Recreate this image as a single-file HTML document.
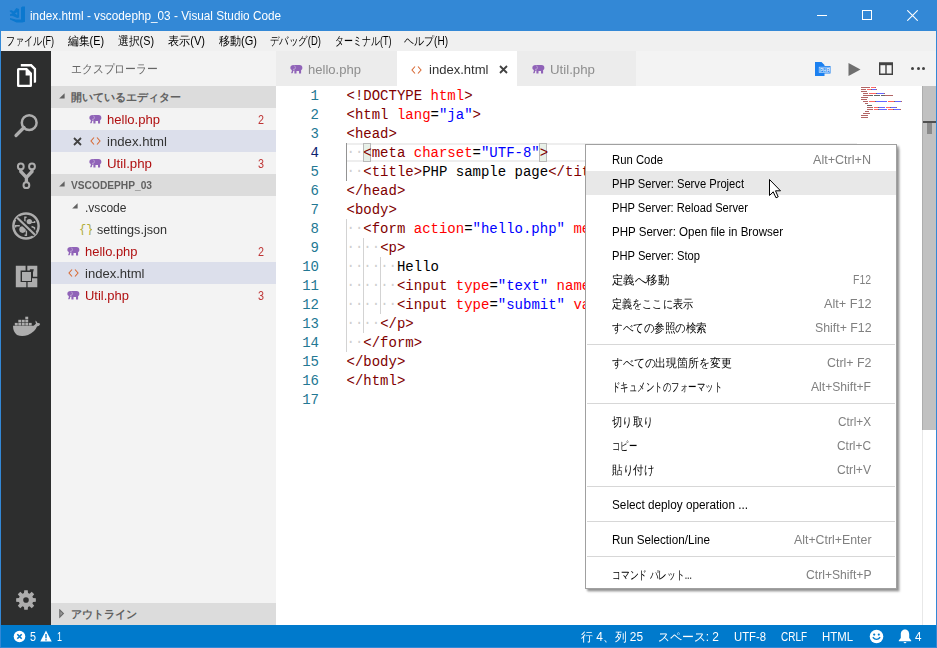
<!DOCTYPE html>
<html lang="ja">
<head>
<meta charset="utf-8">
<style>
*{margin:0;padding:0;box-sizing:border-box}
html,body{width:937px;height:648px;overflow:hidden;background:#fff}
body{position:relative;font-family:"Liberation Sans",sans-serif;background:#3388d6}
.a{position:absolute;white-space:nowrap}
.t{transform-origin:0 0}
.mono{font-family:"Liberation Mono",monospace}
</style>
</head>
<body>
<div class="a" style="left:0;top:0;width:937px;height:31px;background:#3388d6"></div>
<svg class="a" style="left:0;top:0" width="30" height="30" viewBox="0 0 30 30"><g fill="#0b78cf"><path d="M21 7.6 L22.4 6.6 H25 V21.7 L22.2 22.6 H16.5 L10 19.6 V18 L16 19.6 H21 Z"/><path d="M16.3 8.1 L19.1 9 V17.4 L17.2 17.9 L12.2 15.7 L10.1 16 V14.3 L12.4 13.2 L9.8 11.4 V10.6 L11.6 10.2 L13.8 11.4 Z M17.2 12 V15 L15 13.5 Z" fill-rule="evenodd"/></g></svg>
<span class="a t" id="title" style="left:30px;top:7.84px;font-size:12px;line-height:16px;color:#fff;transform:scaleX(0.9808);">index.html - vscodephp_03 - Visual Studio Code</span>
<div class="a" style="left:817px;top:15px;width:10px;height:1px;background:#fff"></div>
<div class="a" style="left:862px;top:10px;width:10px;height:10px;border:1px solid #fff"></div>
<svg class="a" style="left:907px;top:10px" width="11" height="11" viewBox="0 0 11 11"><path d="M0.3 0.3 L10.7 10.7 M10.7 0.3 L0.3 10.7" stroke="#fff" stroke-width="1.1"/></svg>
<div class="a" style="left:1px;top:31px;width:935px;height:20px;background:#f0f0f0"></div>
<span class="a t" id="m1" style="left:6px;top:32.84px;font-size:12px;line-height:16px;color:#000;transform:scaleX(0.7580);">ファイル(F)</span>
<span class="a t" id="m2" style="left:68px;top:32.84px;font-size:12px;line-height:16px;color:#000;transform:scaleX(0.9000);">編集(E)</span>
<span class="a t" id="m3" style="left:118px;top:32.84px;font-size:12px;line-height:16px;color:#000;transform:scaleX(0.9000);">選択(S)</span>
<span class="a t" id="m4" style="left:168px;top:32.84px;font-size:12px;line-height:16px;color:#000;transform:scaleX(0.9250);">表示(V)</span>
<span class="a t" id="m5" style="left:219px;top:32.84px;font-size:12px;line-height:16px;color:#000;transform:scaleX(0.9195);">移動(G)</span>
<span class="a t" id="m6" style="left:270px;top:32.84px;font-size:12px;line-height:16px;color:#000;transform:scaleX(0.7886);">デバッグ(D)</span>
<span class="a t" id="m7" style="left:335px;top:32.84px;font-size:12px;line-height:16px;color:#000;transform:scaleX(0.7501);">ターミナル(T)</span>
<span class="a t" id="m8" style="left:404px;top:32.84px;font-size:12px;line-height:16px;color:#000;transform:scaleX(0.8353);">ヘルプ(H)</span>
<div class="a" style="left:1px;top:51px;width:50px;height:574px;background:#2d2e2e"></div>
<svg class="a" style="left:0;top:0" width="52" height="648" viewBox="0 0 52 648">
<path d="M17 69.5 Q17 68 18.5 68 H27 L32 73 V85.6 Q32 87.1 30.5 87.1 H18.5 Q17 87.1 17 85.6 Z M19.3 70.3 V84.7 H29.7 V75.4 H25.6 V70.3 Z" fill="#fff" fill-rule="evenodd"/>
<path d="M20.8 64 H31.6 L36.1 68.5 V81.7 Q36.1 82.8 35 82.8 H33.8 V69.5 L30.6 66.4 H20.8 Z" fill="#fff"/>
<circle cx="29.2" cy="122.7" r="7.4" fill="none" stroke="#adadad" stroke-width="2.5"/>
<path d="M16 135.5 L24 127.5" stroke="#adadad" stroke-width="3.2" stroke-linecap="round"/>
<circle cx="20.8" cy="166.4" r="2.9" fill="none" stroke="#adadad" stroke-width="2"/>
<circle cx="32" cy="166.4" r="2.9" fill="none" stroke="#adadad" stroke-width="2"/>
<circle cx="26.4" cy="185.2" r="2.9" fill="none" stroke="#adadad" stroke-width="2"/>
<path d="M20.8 169.3 V171.5 L26.4 177.5 L32 171.5 V169.3 M26.4 177 V182.3" stroke="#adadad" stroke-width="3.3" fill="none"/>
<circle cx="26" cy="226" r="12.6" fill="none" stroke="#adadad" stroke-width="2.5"/>
<circle cx="22.6" cy="229.6" r="3.3" fill="#adadad"/>
<circle cx="29.3" cy="221.6" r="2.7" fill="#adadad"/>
<path d="M24.9 221.5 V217.3 H26.6 M31.2 222.4 H34.6 V221 M15.6 227.5 V225.8 H19.8 M26.4 230.5 V235.3 H24.6 M31.5 226.5 L34.5 227.8 V229.6" stroke="#adadad" stroke-width="1.4" fill="none"/>
<path d="M17.2 217.7 L34.9 234.7" stroke="#2d2e2e" stroke-width="5"/>
<path d="M17.2 217.7 L34.9 234.7" stroke="#adadad" stroke-width="2.2"/>
<path d="M15.8 265.8 H25.6 V270.6 H20.6 V282 H26.3 V287.3 H15.8 Z" fill="#adadad"/>
<path d="M27.6 278.2 H37.3 V287.3 H27.6 V282 H32 V278.2 Z" fill="#adadad"/>
<path d="M27.3 265.8 H37.3 V276.7 H33 V272.6 L33.8 269.2 H30 L29.7 270.6 H27.3 Z" fill="#adadad"/>
<rect x="22" y="272" width="9" height="9" fill="#adadad"/>
<path d="M13 325.8 H33.5 Q35 325 36 323.5 Q35.2 322 35.6 320.5 Q37 321.8 37.5 323 Q39.5 322.8 40.2 324 Q39.5 326 37 326.5 Q35 332 28 335 Q22 337 17 335 Q13 332 13 325.8 Z" fill="#adadad"/>
<g fill="#adadad"><rect x="14.8" y="322.9" width="2.9" height="2.6"/><rect x="18.3" y="322.9" width="2.9" height="2.6"/><rect x="21.8" y="322.9" width="2.9" height="2.6"/><rect x="25.3" y="322.9" width="2.9" height="2.6"/><rect x="28.8" y="322.9" width="2.9" height="2.6"/>
<rect x="18.3" y="319.8" width="2.9" height="2.6"/><rect x="21.8" y="319.8" width="2.9" height="2.6"/><rect x="25.3" y="319.8" width="2.9" height="2.6"/><rect x="25.3" y="316.7" width="2.9" height="2.6"/></g>
<path d="M33.02 598.01 L35.85 598.25 L35.85 601.75 L33.02 601.99 L32.37 603.56 L34.20 605.72 L31.72 608.20 L29.56 606.37 L27.99 607.02 L27.75 609.85 L24.25 609.85 L24.01 607.02 L22.44 606.37 L20.28 608.20 L17.80 605.72 L19.63 603.56 L18.98 601.99 L16.15 601.75 L16.15 598.25 L18.98 598.01 L19.63 596.44 L17.80 594.28 L20.28 591.80 L22.44 593.63 L24.01 592.98 L24.25 590.15 L27.75 590.15 L27.99 592.98 L29.56 593.63 L31.72 591.80 L34.20 594.28 L32.37 596.44 Z M28.8 600 A2.8 2.8 0 1 0 23.2 600 A2.8 2.8 0 1 0 28.8 600 Z" fill="#adadad" fill-rule="evenodd"/>
</svg>
<div class="a" style="left:51px;top:51px;width:225px;height:574px;background:#f3f3f3"></div>
<span class="a t" id="sbtitle" style="left:71px;top:61.34px;font-size:12px;line-height:16px;color:#666;transform:scaleX(0.9062);">エクスプローラー</span>
<div class="a" style="left:51px;top:86px;width:225px;height:22px;background:#dcdcdc"></div>
<svg class="a" style="left:58.5px;top:93px" width="6" height="6" viewBox="0 0 6 6"><path d="M5.6 0.2 V5.6 H0.2 Z" fill="#616161"/></svg>
<span class="a t" id="sh1" style="left:71px;top:90.19px;font-size:11px;line-height:14px;color:#616161;font-weight:bold;">開いているエディター</span>
<div class="a" style="left:51px;top:130px;width:225px;height:22px;background:#dcdfeb"></div>
<svg class="a" style="left:89px;top:115px" width="13" height="9" viewBox="0 0 13 9"><path d="M2 0.3 Q3 0 4.5 0 H9.5 Q12.4 0 12.4 3 Q12.4 4.6 11.1 5.3 V8.6 H9 V6 H6.5 V8.6 H4.4 V5.6 Q3.6 5.5 3.1 5.9 V6.9 Q2.9 8.2 1.8 8.5 L1.1 7.6 Q1.8 7.1 1.8 6.1 V4.9 Q0.4 4.5 0.3 3 Q0.2 1 2 0.3 Z" fill="#9063b8"/><path d="M4.6 0.7 Q6 2.5 5 4 Q4.2 4.6 3 4.3" stroke="#c4b0d8" stroke-width="0.8" fill="none"/></svg>
<span class="a t" id="oe1" style="left:107px;top:111.00px;font-size:13px;line-height:17px;color:#b01011;transform:scaleX(1.0042);">hello.php</span>
<span class="a t" id="oe1b" style="left:257.5px;top:111.00px;font-size:13px;line-height:17px;color:#be3333;transform:scaleX(0.8293);">2</span>
<svg class="a" style="left:73px;top:137px" width="9" height="9" viewBox="0 0 9 9"><path d="M1 1 L8 8 M8 1 L1 8" stroke="#424242" stroke-width="1.8"/></svg>
<svg class="a" style="left:90px;top:136px" width="11" height="10" viewBox="0 0 11 10"><path d="M4 1.5 L1 5 L4 8.5 M7 1.5 L10 5 L7 8.5" stroke="#d86a35" stroke-width="1.1" fill="none"/></svg>
<span class="a t" id="oe2" style="left:107px;top:133.00px;font-size:13px;line-height:17px;color:#333;transform:scaleX(1.0126);">index.html</span>
<svg class="a" style="left:89px;top:159px" width="13" height="9" viewBox="0 0 13 9"><path d="M2 0.3 Q3 0 4.5 0 H9.5 Q12.4 0 12.4 3 Q12.4 4.6 11.1 5.3 V8.6 H9 V6 H6.5 V8.6 H4.4 V5.6 Q3.6 5.5 3.1 5.9 V6.9 Q2.9 8.2 1.8 8.5 L1.1 7.6 Q1.8 7.1 1.8 6.1 V4.9 Q0.4 4.5 0.3 3 Q0.2 1 2 0.3 Z" fill="#9063b8"/><path d="M4.6 0.7 Q6 2.5 5 4 Q4.2 4.6 3 4.3" stroke="#c4b0d8" stroke-width="0.8" fill="none"/></svg>
<span class="a t" id="oe3" style="left:107px;top:155.00px;font-size:13px;line-height:17px;color:#b01011;transform:scaleX(1.0209);">Util.php</span>
<span class="a t" id="oe3b" style="left:257.5px;top:155.00px;font-size:13px;line-height:17px;color:#be3333;transform:scaleX(0.8293);">3</span>
<div class="a" style="left:51px;top:174px;width:225px;height:22px;background:#dcdcdc"></div>
<svg class="a" style="left:58.5px;top:181px" width="6" height="6" viewBox="0 0 6 6"><path d="M5.6 0.2 V5.6 H0.2 Z" fill="#616161"/></svg>
<span class="a t" id="sh2" style="left:71px;top:178.19px;font-size:11px;line-height:14px;color:#616161;transform:scaleX(0.9264);font-weight:bold;">VSCODEPHP_03</span>
<svg class="a" style="left:72px;top:203px" width="6" height="6" viewBox="0 0 6 6"><path d="M5.6 0.2 V5.6 H0.2 Z" fill="#616161"/></svg>
<span class="a t" id="f1" style="left:85px;top:199.00px;font-size:13px;line-height:17px;color:#333;transform:scaleX(0.9261);">.vscode</span>
<svg class="a" style="left:79px;top:221.5px" width="13" height="13" viewBox="0 0 13 13"><text x="0" y="11" font-family="Liberation Mono" font-size="12" fill="#b0ad3a">{}</text></svg>
<span class="a t" id="f2" style="left:97px;top:221.00px;font-size:13px;line-height:17px;color:#333;transform:scaleX(0.9687);">settings.json</span>
<svg class="a" style="left:67px;top:247px" width="13" height="9" viewBox="0 0 13 9"><path d="M2 0.3 Q3 0 4.5 0 H9.5 Q12.4 0 12.4 3 Q12.4 4.6 11.1 5.3 V8.6 H9 V6 H6.5 V8.6 H4.4 V5.6 Q3.6 5.5 3.1 5.9 V6.9 Q2.9 8.2 1.8 8.5 L1.1 7.6 Q1.8 7.1 1.8 6.1 V4.9 Q0.4 4.5 0.3 3 Q0.2 1 2 0.3 Z" fill="#9063b8"/><path d="M4.6 0.7 Q6 2.5 5 4 Q4.2 4.6 3 4.3" stroke="#c4b0d8" stroke-width="0.8" fill="none"/></svg>
<span class="a t" id="f3" style="left:85px;top:243.00px;font-size:13px;line-height:17px;color:#b01011;transform:scaleX(0.9946);">hello.php</span>
<span class="a t" id="f3b" style="left:257.5px;top:243.00px;font-size:13px;line-height:17px;color:#be3333;transform:scaleX(0.8293);">2</span>
<div class="a" style="left:51px;top:262px;width:225px;height:22px;background:#dcdfeb"></div>
<svg class="a" style="left:68px;top:268px" width="11" height="10" viewBox="0 0 11 10"><path d="M4 1.5 L1 5 L4 8.5 M7 1.5 L10 5 L7 8.5" stroke="#d86a35" stroke-width="1.1" fill="none"/></svg>
<span class="a t" id="f4" style="left:85px;top:265.00px;font-size:13px;line-height:17px;color:#333;transform:scaleX(1.0043);">index.html</span>
<svg class="a" style="left:67px;top:291px" width="13" height="9" viewBox="0 0 13 9"><path d="M2 0.3 Q3 0 4.5 0 H9.5 Q12.4 0 12.4 3 Q12.4 4.6 11.1 5.3 V8.6 H9 V6 H6.5 V8.6 H4.4 V5.6 Q3.6 5.5 3.1 5.9 V6.9 Q2.9 8.2 1.8 8.5 L1.1 7.6 Q1.8 7.1 1.8 6.1 V4.9 Q0.4 4.5 0.3 3 Q0.2 1 2 0.3 Z" fill="#9063b8"/><path d="M4.6 0.7 Q6 2.5 5 4 Q4.2 4.6 3 4.3" stroke="#c4b0d8" stroke-width="0.8" fill="none"/></svg>
<span class="a t" id="f5" style="left:85px;top:287.00px;font-size:13px;line-height:17px;color:#b01011;transform:scaleX(0.9983);">Util.php</span>
<span class="a t" id="f5b" style="left:257.5px;top:287.00px;font-size:13px;line-height:17px;color:#be3333;transform:scaleX(0.8293);">3</span>
<div class="a" style="left:51px;top:603px;width:225px;height:22px;background:#dcdcdc"></div>
<svg class="a" style="left:59px;top:609px" width="6" height="10" viewBox="0 0 6 10"><path d="M0.8 0.9 L4.4 4.5 L0.8 8.1 Z" fill="#9a9a9a" stroke="#6a6a6a" stroke-width="1.1"/></svg>
<span class="a t" id="sh3" style="left:71px;top:607.19px;font-size:11px;line-height:14px;color:#616161;font-weight:bold;">アウトライン</span>
<div class="a" style="left:276px;top:51px;width:660px;height:574px;background:#fff"></div>
<div class="a" style="left:276px;top:51px;width:660px;height:35px;background:#f3f3f3"></div>
<div class="a" style="left:276px;top:51px;width:121px;height:35px;background:#ececec"></div>
<div class="a" style="left:397px;top:51px;width:120px;height:35px;background:#fff"></div>
<div class="a" style="left:517px;top:51px;width:119px;height:35px;background:#ececec"></div>
<svg class="a" style="left:290px;top:65px" width="13" height="9" viewBox="0 0 13 9"><path d="M2 0.3 Q3 0 4.5 0 H9.5 Q12.4 0 12.4 3 Q12.4 4.6 11.1 5.3 V8.6 H9 V6 H6.5 V8.6 H4.4 V5.6 Q3.6 5.5 3.1 5.9 V6.9 Q2.9 8.2 1.8 8.5 L1.1 7.6 Q1.8 7.1 1.8 6.1 V4.9 Q0.4 4.5 0.3 3 Q0.2 1 2 0.3 Z" fill="#9063b8"/><path d="M4.6 0.7 Q6 2.5 5 4 Q4.2 4.6 3 4.3" stroke="#c4b0d8" stroke-width="0.8" fill="none"/></svg>
<span class="a t" id="tab1" style="left:308px;top:61.00px;font-size:13px;line-height:17px;color:#8e8e8e;transform:scaleX(1.0041);">hello.php</span>
<svg class="a" style="left:411px;top:65px" width="11" height="10" viewBox="0 0 11 10"><path d="M4 1.5 L1 5 L4 8.5 M7 1.5 L10 5 L7 8.5" stroke="#d86a35" stroke-width="1.1" fill="none"/></svg>
<span class="a t" id="tab2" style="left:429px;top:61.00px;font-size:13px;line-height:17px;color:#333;transform:scaleX(1.0042);">index.html</span>
<svg class="a" style="left:499px;top:65px" width="9" height="9" viewBox="0 0 9 9"><path d="M1 1 L8 8 M8 1 L1 8" stroke="#424242" stroke-width="1.8"/></svg>
<svg class="a" style="left:532px;top:65px" width="13" height="9" viewBox="0 0 13 9"><path d="M2 0.3 Q3 0 4.5 0 H9.5 Q12.4 0 12.4 3 Q12.4 4.6 11.1 5.3 V8.6 H9 V6 H6.5 V8.6 H4.4 V5.6 Q3.6 5.5 3.1 5.9 V6.9 Q2.9 8.2 1.8 8.5 L1.1 7.6 Q1.8 7.1 1.8 6.1 V4.9 Q0.4 4.5 0.3 3 Q0.2 1 2 0.3 Z" fill="#9063b8"/><path d="M4.6 0.7 Q6 2.5 5 4 Q4.2 4.6 3 4.3" stroke="#c4b0d8" stroke-width="0.8" fill="none"/></svg>
<span class="a t" id="tab3" style="left:550px;top:61.00px;font-size:13px;line-height:17px;color:#8e8e8e;transform:scaleX(1.0209);">Util.php</span>
<svg class="a" style="left:814px;top:61px" width="18" height="16" viewBox="0 0 18 16"><path d="M1 1 H7.5 L10.5 4 V5 H4 V12 H10.5 V15 H1 Z" fill="#1b80f0"/><rect x="4" y="5" width="12.5" height="7.5" fill="#1b80f0"/><rect x="5.2" y="6.2" width="10.1" height="5.1" fill="none" stroke="#cfe3fb" stroke-width="0.7"/><text x="6" y="10.6" font-family="Liberation Sans" font-size="4.6" font-weight="bold" fill="#e8f1fd">PHP</text></svg>
<svg class="a" style="left:848px;top:63px" width="13" height="13" viewBox="0 0 13 13"><path d="M0.5 0 L12.5 6.5 L0.5 13 Z" fill="#6f6f6f"/></svg>
<svg class="a" style="left:878px;top:62px" width="16" height="14" viewBox="0 0 16 14"><path d="M1.7 1 H14.3 V12.3 H1.7 Z M8 1 V12.3" stroke="#424242" stroke-width="1.4" fill="none"/><rect x="1" y="1" width="14" height="2.2" fill="#424242"/></svg>
<div class="a" style="left:911.0px;top:67px;width:3px;height:3px;border-radius:50%;background:#424242"></div>
<div class="a" style="left:916.5px;top:67px;width:3px;height:3px;border-radius:50%;background:#424242"></div>
<div class="a" style="left:922.0px;top:67px;width:3px;height:3px;border-radius:50%;background:#424242"></div>
<div class="a" style="left:347px;top:143px;width:510px;height:19px;border-top:2px solid #eeeeee;border-bottom:2px solid #eeeeee"></div>
<div class="a" style="left:363px;top:143px;width:8.4px;height:19px;background:#e8f0e8;border:1px solid #b9b9b9"></div>
<div class="a" style="left:539px;top:143px;width:8.4px;height:19px;background:#e8f0e8;border:1px solid #b9b9b9"></div>
<div class="a" style="left:346px;top:143px;width:1px;height:38px;background:#939393"></div>
<div class="a" style="left:346px;top:219px;width:1px;height:133px;background:#d3d3d3"></div>
<div class="a" style="left:363px;top:238px;width:1px;height:95px;background:#d3d3d3"></div>
<div class="a" style="left:380px;top:257px;width:1px;height:57px;background:#d3d3d3"></div>
<div class="a mono" style="left:290px;width:29px;text-align:right;top:87px;height:19px;font-size:14px;line-height:19px;color:#237893">1</div>
<div class="a mono" style="left:346.5px;top:87px;height:19px;font-size:14px;line-height:19px;color:#000"><span style="color:#800000">&lt;!DOCTYPE</span> <span style="color:#ff0000">html</span><span style="color:#800000">&gt;</span></div>
<div class="a mono" style="left:290px;width:29px;text-align:right;top:106px;height:19px;font-size:14px;line-height:19px;color:#237893">2</div>
<div class="a mono" style="left:346.5px;top:106px;height:19px;font-size:14px;line-height:19px;color:#000"><span style="color:#800000">&lt;html</span> <span style="color:#ff0000">lang</span><span style="color:#000">=</span><span style="color:#0000ff">&quot;ja&quot;</span><span style="color:#800000">&gt;</span></div>
<div class="a mono" style="left:290px;width:29px;text-align:right;top:125px;height:19px;font-size:14px;line-height:19px;color:#237893">3</div>
<div class="a mono" style="left:346.5px;top:125px;height:19px;font-size:14px;line-height:19px;color:#000"><span style="color:#800000">&lt;head</span><span style="color:#800000">&gt;</span></div>
<div class="a mono" style="left:290px;width:29px;text-align:right;top:144px;height:19px;font-size:14px;line-height:19px;color:#0b216f">4</div>
<div class="a mono" style="left:346.5px;top:144px;height:19px;font-size:14px;line-height:19px;color:#000"><span style="color:#cfcfcf;position:relative;top:-1px">·</span><span style="color:#cfcfcf;position:relative;top:-1px">·</span><span style="color:#800000">&lt;meta</span> <span style="color:#ff0000">charset</span><span style="color:#000">=</span><span style="color:#0000ff">&quot;UTF-8&quot;</span><span style="color:#800000">&gt;</span></div>
<div class="a mono" style="left:290px;width:29px;text-align:right;top:163px;height:19px;font-size:14px;line-height:19px;color:#237893">5</div>
<div class="a mono" style="left:346.5px;top:163px;height:19px;font-size:14px;line-height:19px;color:#000"><span style="color:#cfcfcf;position:relative;top:-1px">·</span><span style="color:#cfcfcf;position:relative;top:-1px">·</span><span style="color:#800000">&lt;title</span><span style="color:#800000">&gt;</span>PHP sample page<span style="color:#800000">&lt;/title</span><span style="color:#800000">&gt;</span></div>
<div class="a mono" style="left:290px;width:29px;text-align:right;top:182px;height:19px;font-size:14px;line-height:19px;color:#237893">6</div>
<div class="a mono" style="left:346.5px;top:182px;height:19px;font-size:14px;line-height:19px;color:#000"><span style="color:#800000">&lt;/head</span><span style="color:#800000">&gt;</span></div>
<div class="a mono" style="left:290px;width:29px;text-align:right;top:201px;height:19px;font-size:14px;line-height:19px;color:#237893">7</div>
<div class="a mono" style="left:346.5px;top:201px;height:19px;font-size:14px;line-height:19px;color:#000"><span style="color:#800000">&lt;body</span><span style="color:#800000">&gt;</span></div>
<div class="a mono" style="left:290px;width:29px;text-align:right;top:220px;height:19px;font-size:14px;line-height:19px;color:#237893">8</div>
<div class="a mono" style="left:346.5px;top:220px;height:19px;font-size:14px;line-height:19px;color:#000"><span style="color:#cfcfcf;position:relative;top:-1px">·</span><span style="color:#cfcfcf;position:relative;top:-1px">·</span><span style="color:#800000">&lt;form</span> <span style="color:#ff0000">action</span><span style="color:#000">=</span><span style="color:#0000ff">&quot;hello.php&quot;</span> <span style="color:#ff0000">method</span><span style="color:#000">=</span><span style="color:#0000ff">&quot;post&quot;</span><span style="color:#800000">&gt;</span></div>
<div class="a mono" style="left:290px;width:29px;text-align:right;top:239px;height:19px;font-size:14px;line-height:19px;color:#237893">9</div>
<div class="a mono" style="left:346.5px;top:239px;height:19px;font-size:14px;line-height:19px;color:#000"><span style="color:#cfcfcf;position:relative;top:-1px">·</span><span style="color:#cfcfcf;position:relative;top:-1px">·</span><span style="color:#cfcfcf;position:relative;top:-1px">·</span><span style="color:#cfcfcf;position:relative;top:-1px">·</span><span style="color:#800000">&lt;p</span><span style="color:#800000">&gt;</span></div>
<div class="a mono" style="left:290px;width:29px;text-align:right;top:258px;height:19px;font-size:14px;line-height:19px;color:#237893">10</div>
<div class="a mono" style="left:346.5px;top:258px;height:19px;font-size:14px;line-height:19px;color:#000"><span style="color:#cfcfcf;position:relative;top:-1px">·</span><span style="color:#cfcfcf;position:relative;top:-1px">·</span><span style="color:#cfcfcf;position:relative;top:-1px">·</span><span style="color:#cfcfcf;position:relative;top:-1px">·</span><span style="color:#cfcfcf;position:relative;top:-1px">·</span><span style="color:#cfcfcf;position:relative;top:-1px">·</span>Hello</div>
<div class="a mono" style="left:290px;width:29px;text-align:right;top:277px;height:19px;font-size:14px;line-height:19px;color:#237893">11</div>
<div class="a mono" style="left:346.5px;top:277px;height:19px;font-size:14px;line-height:19px;color:#000"><span style="color:#cfcfcf;position:relative;top:-1px">·</span><span style="color:#cfcfcf;position:relative;top:-1px">·</span><span style="color:#cfcfcf;position:relative;top:-1px">·</span><span style="color:#cfcfcf;position:relative;top:-1px">·</span><span style="color:#cfcfcf;position:relative;top:-1px">·</span><span style="color:#cfcfcf;position:relative;top:-1px">·</span><span style="color:#800000">&lt;input</span> <span style="color:#ff0000">type</span><span style="color:#000">=</span><span style="color:#0000ff">&quot;text&quot;</span> <span style="color:#ff0000">name</span><span style="color:#000">=</span><span style="color:#0000ff">&quot;msg&quot;</span><span style="color:#800000">&gt;</span></div>
<div class="a mono" style="left:290px;width:29px;text-align:right;top:296px;height:19px;font-size:14px;line-height:19px;color:#237893">12</div>
<div class="a mono" style="left:346.5px;top:296px;height:19px;font-size:14px;line-height:19px;color:#000"><span style="color:#cfcfcf;position:relative;top:-1px">·</span><span style="color:#cfcfcf;position:relative;top:-1px">·</span><span style="color:#cfcfcf;position:relative;top:-1px">·</span><span style="color:#cfcfcf;position:relative;top:-1px">·</span><span style="color:#cfcfcf;position:relative;top:-1px">·</span><span style="color:#cfcfcf;position:relative;top:-1px">·</span><span style="color:#800000">&lt;input</span> <span style="color:#ff0000">type</span><span style="color:#000">=</span><span style="color:#0000ff">&quot;submit&quot;</span> <span style="color:#ff0000">value</span><span style="color:#000">=</span><span style="color:#0000ff">&quot;送信&quot;</span><span style="color:#800000">&gt;</span></div>
<div class="a mono" style="left:290px;width:29px;text-align:right;top:315px;height:19px;font-size:14px;line-height:19px;color:#237893">13</div>
<div class="a mono" style="left:346.5px;top:315px;height:19px;font-size:14px;line-height:19px;color:#000"><span style="color:#cfcfcf;position:relative;top:-1px">·</span><span style="color:#cfcfcf;position:relative;top:-1px">·</span><span style="color:#cfcfcf;position:relative;top:-1px">·</span><span style="color:#cfcfcf;position:relative;top:-1px">·</span><span style="color:#800000">&lt;/p</span><span style="color:#800000">&gt;</span></div>
<div class="a mono" style="left:290px;width:29px;text-align:right;top:334px;height:19px;font-size:14px;line-height:19px;color:#237893">14</div>
<div class="a mono" style="left:346.5px;top:334px;height:19px;font-size:14px;line-height:19px;color:#000"><span style="color:#cfcfcf;position:relative;top:-1px">·</span><span style="color:#cfcfcf;position:relative;top:-1px">·</span><span style="color:#800000">&lt;/form</span><span style="color:#800000">&gt;</span></div>
<div class="a mono" style="left:290px;width:29px;text-align:right;top:353px;height:19px;font-size:14px;line-height:19px;color:#237893">15</div>
<div class="a mono" style="left:346.5px;top:353px;height:19px;font-size:14px;line-height:19px;color:#000"><span style="color:#800000">&lt;/body</span><span style="color:#800000">&gt;</span></div>
<div class="a mono" style="left:290px;width:29px;text-align:right;top:372px;height:19px;font-size:14px;line-height:19px;color:#237893">16</div>
<div class="a mono" style="left:346.5px;top:372px;height:19px;font-size:14px;line-height:19px;color:#000"><span style="color:#800000">&lt;/html</span><span style="color:#800000">&gt;</span></div>
<div class="a mono" style="left:290px;width:29px;text-align:right;top:391px;height:19px;font-size:14px;line-height:19px;color:#237893">17</div>
<div class="a mono" style="left:346.5px;top:391px;height:19px;font-size:14px;line-height:19px;color:#000"></div>
<svg class="a" style="left:0;top:0;opacity:.6" width="937" height="648" viewBox="0 0 937 648"><rect x="861" y="87" width="9" height="1" fill="#800000"/><rect x="871" y="87" width="4" height="1" fill="#ff0000"/><rect x="875" y="87" width="1" height="1" fill="#800000"/><rect x="861" y="89" width="5" height="1" fill="#800000"/><rect x="867" y="89" width="4" height="1" fill="#ff0000"/><rect x="871" y="89" width="1" height="1" fill="#000"/><rect x="872" y="89" width="4" height="1" fill="#0000ff"/><rect x="876" y="89" width="1" height="1" fill="#800000"/><rect x="861" y="91" width="6" height="1" fill="#800000"/><rect x="863" y="93" width="5" height="1" fill="#800000"/><rect x="869" y="93" width="7" height="1" fill="#ff0000"/><rect x="876" y="93" width="1" height="1" fill="#000"/><rect x="877" y="93" width="7" height="1" fill="#0000ff"/><rect x="884" y="93" width="1" height="1" fill="#800000"/><rect x="863" y="95" width="7" height="1" fill="#800000"/><rect x="870" y="95" width="3" height="1" fill="#000"/><rect x="874" y="95" width="6" height="1" fill="#000"/><rect x="881" y="95" width="4" height="1" fill="#000"/><rect x="885" y="95" width="8" height="1" fill="#800000"/><rect x="861" y="97" width="7" height="1" fill="#800000"/><rect x="861" y="99" width="6" height="1" fill="#800000"/><rect x="863" y="101" width="5" height="1" fill="#800000"/><rect x="869" y="101" width="6" height="1" fill="#ff0000"/><rect x="875" y="101" width="1" height="1" fill="#000"/><rect x="876" y="101" width="11" height="1" fill="#0000ff"/><rect x="888" y="101" width="6" height="1" fill="#ff0000"/><rect x="894" y="101" width="1" height="1" fill="#000"/><rect x="895" y="101" width="6" height="1" fill="#0000ff"/><rect x="901" y="101" width="1" height="1" fill="#800000"/><rect x="865" y="103" width="3" height="1" fill="#800000"/><rect x="867" y="105" width="5" height="1" fill="#000"/><rect x="867" y="107" width="6" height="1" fill="#800000"/><rect x="874" y="107" width="4" height="1" fill="#ff0000"/><rect x="878" y="107" width="1" height="1" fill="#000"/><rect x="879" y="107" width="6" height="1" fill="#0000ff"/><rect x="886" y="107" width="4" height="1" fill="#ff0000"/><rect x="890" y="107" width="1" height="1" fill="#000"/><rect x="891" y="107" width="5" height="1" fill="#0000ff"/><rect x="896" y="107" width="1" height="1" fill="#800000"/><rect x="867" y="109" width="6" height="1" fill="#800000"/><rect x="874" y="109" width="4" height="1" fill="#ff0000"/><rect x="878" y="109" width="1" height="1" fill="#000"/><rect x="879" y="109" width="8" height="1" fill="#0000ff"/><rect x="888" y="109" width="5" height="1" fill="#ff0000"/><rect x="893" y="109" width="1" height="1" fill="#000"/><rect x="894" y="109" width="6" height="1" fill="#0000ff"/><rect x="900" y="109" width="1" height="1" fill="#800000"/><rect x="865" y="111" width="4" height="1" fill="#800000"/><rect x="863" y="113" width="7" height="1" fill="#800000"/><rect x="861" y="115" width="7" height="1" fill="#800000"/><rect x="861" y="117" width="7" height="1" fill="#800000"/></svg>
<div class="a" style="left:922px;top:86px;width:1px;height:539px;background:#e8e8e8"></div>
<div class="a" style="left:922px;top:86px;width:14px;height:344px;background:#c1c1c1"></div>
<div class="a" style="left:923px;top:121px;width:13px;height:2px;background:#505050"></div>
<div class="a" style="left:922px;top:86px;width:1px;height:344px;background:#adadad"></div>
<div class="a" style="left:927px;top:123px;width:5px;height:11px;background:#8a8a8a"></div>
<div class="a" style="left:1px;top:625px;width:935px;height:22px;background:#007acc"></div>
<svg class="a" style="left:13px;top:630px" width="13" height="13" viewBox="0 0 13 13"><circle cx="6.5" cy="6.5" r="5.8" fill="#fff"/><path d="M4.3 4.3 L8.7 8.7 M8.7 4.3 L4.3 8.7" stroke="#007acc" stroke-width="1.6"/></svg>
<span class="a t" id="st1" style="left:29.5px;top:628.84px;font-size:12px;line-height:16px;color:#fff;transform:scaleX(0.8972);">5</span>
<svg class="a" style="left:40px;top:630px" width="12" height="12" viewBox="0 0 12 12"><path d="M6 0.5 L11.7 11.5 H0.3 Z" fill="#fff"/><rect x="5.3" y="4" width="1.4" height="4.3" fill="#007acc"/><rect x="5.3" y="9.2" width="1.4" height="1.3" fill="#007acc"/></svg>
<span class="a t" id="st2" style="left:56.5px;top:628.84px;font-size:12px;line-height:16px;color:#fff;transform:scaleX(0.7477);">1</span>
<span class="a t" id="st3" style="left:581px;top:628.84px;font-size:12px;line-height:16px;color:#fff;transform:scaleX(0.9887);">行 4、列 25</span>
<span class="a t" id="st4" style="left:658px;top:628.84px;font-size:12px;line-height:16px;color:#fff;transform:scaleX(0.9944);">スペース: 2</span>
<span class="a t" id="st5" style="left:734px;top:628.84px;font-size:12px;line-height:16px;color:#fff;transform:scaleX(0.9412);">UTF-8</span>
<span class="a t" id="st6" style="left:781px;top:628.84px;font-size:12px;line-height:16px;color:#fff;transform:scaleX(0.8295);">CRLF</span>
<span class="a t" id="st7" style="left:822px;top:628.84px;font-size:12px;line-height:16px;color:#fff;transform:scaleX(0.9488);">HTML</span>
<svg class="a" style="left:869px;top:629px" width="15" height="15" viewBox="0 0 15 15"><circle cx="7.5" cy="7.5" r="6.8" fill="#fff"/><circle cx="5.2" cy="5.6" r="1.1" fill="#007acc"/><circle cx="9.8" cy="5.6" r="1.1" fill="#007acc"/><path d="M3.8 8.3 Q7.5 12.5 11.2 8.3" stroke="#007acc" stroke-width="1.4" fill="none"/></svg>
<svg class="a" style="left:898px;top:629px" width="14" height="15" viewBox="0 0 14 15"><path d="M7 0.5 C4 0.5 2.8 3 2.8 5.5 V9 L0.8 11.5 V12.3 H13.2 V11.5 L11.2 9 V5.5 C11.2 3 10 0.5 7 0.5 Z" fill="#fff"/><path d="M5.3 13 H8.7 L7 14.5 Z" fill="#fff"/></svg>
<span class="a t" id="st8" style="left:914.5px;top:628.84px;font-size:12px;line-height:16px;color:#fff;transform:scaleX(0.9720);">4</span>
<div class="a" style="left:588px;top:149px;width:312px;height:443px;background:rgba(0,0,0,.12);filter:blur(1px)"></div>
<div class="a" style="left:585px;top:144px;width:312px;height:445px;background:#fff;border:1px solid #a0a0a0;box-shadow:2px 2px 2px rgba(0,0,0,.35)"></div>
<span class="a t" id="cm0" style="left:612px;top:151.84px;font-size:12px;line-height:16px;color:#000;transform:scaleX(0.9436);">Run Code</span>
<span class="a t" id="cs0" style="left:813px;top:151.84px;font-size:12px;line-height:16px;color:#808080;transform:scaleX(1.0477);">Alt+Ctrl+N</span>
<div class="a" style="left:586px;top:171px;width:310px;height:24px;background:#e8e8e8"></div>
<span class="a t" id="cm1" style="left:612px;top:175.84px;font-size:12px;line-height:16px;color:#000;transform:scaleX(0.9306);">PHP Server: Serve Project</span>
<span class="a t" id="cm2" style="left:612px;top:199.84px;font-size:12px;line-height:16px;color:#000;transform:scaleX(0.9282);">PHP Server: Reload Server</span>
<span class="a t" id="cm3" style="left:612px;top:223.84px;font-size:12px;line-height:16px;color:#000;transform:scaleX(0.9614);">PHP Server: Open file in Browser</span>
<span class="a t" id="cm4" style="left:612px;top:247.84px;font-size:12px;line-height:16px;color:#000;transform:scaleX(0.9312);">PHP Server: Stop</span>
<span class="a t" id="cm5" style="left:612px;top:271.84px;font-size:12px;line-height:16px;color:#000;transform:scaleX(0.9500);">定義へ移動</span>
<span class="a t" id="cs5" style="left:853px;top:271.84px;font-size:12px;line-height:16px;color:#808080;transform:scaleX(0.8701);">F12</span>
<span class="a t" id="cm6" style="left:612px;top:295.84px;font-size:12px;line-height:16px;color:#000;transform:scaleX(0.8437);">定義をここに表示</span>
<span class="a t" id="cs6" style="left:823.5px;top:295.84px;font-size:12px;line-height:16px;color:#808080;transform:scaleX(1.0548);">Alt+ F12</span>
<span class="a t" id="cm7" style="left:612px;top:319.84px;font-size:12px;line-height:16px;color:#000;transform:scaleX(0.8796);">すべての参照の検索</span>
<span class="a t" id="cs7" style="left:814.5px;top:319.84px;font-size:12px;line-height:16px;color:#808080;transform:scaleX(1.0267);">Shift+ F12</span>
<div class="a" style="left:587px;top:344px;width:308px;height:1px;background:#d7d7d7"></div>
<span class="a t" id="cm8" style="left:612px;top:354.84px;font-size:12px;line-height:16px;color:#000;transform:scaleX(0.9053);">すべての出現箇所を変更</span>
<span class="a t" id="cs8" style="left:826.5px;top:354.84px;font-size:12px;line-height:16px;color:#808080;transform:scaleX(1.0345);">Ctrl+ F2</span>
<span class="a t" id="cm9" style="left:612px;top:378.84px;font-size:12px;line-height:16px;color:#000;transform:scaleX(0.7051);">ドキュメントのフォーマット</span>
<span class="a t" id="cs9" style="left:811px;top:378.84px;font-size:12px;line-height:16px;color:#808080;transform:scaleX(1.0105);">Alt+Shift+F</span>
<div class="a" style="left:587px;top:403px;width:308px;height:1px;background:#d7d7d7"></div>
<span class="a t" id="cm10" style="left:612px;top:413.84px;font-size:12px;line-height:16px;color:#000;transform:scaleX(0.8542);">切り取り</span>
<span class="a t" id="cs10" style="left:838px;top:413.84px;font-size:12px;line-height:16px;color:#808080;transform:scaleX(0.9796);">Ctrl+X</span>
<span class="a t" id="cm11" style="left:612px;top:437.84px;font-size:12px;line-height:16px;color:#000;transform:scaleX(0.6945);">コピー</span>
<span class="a t" id="cs11" style="left:837px;top:437.84px;font-size:12px;line-height:16px;color:#808080;transform:scaleX(0.9900);">Ctrl+C</span>
<span class="a t" id="cm12" style="left:612px;top:461.84px;font-size:12px;line-height:16px;color:#000;transform:scaleX(0.8750);">貼り付け</span>
<span class="a t" id="cs12" style="left:837px;top:461.84px;font-size:12px;line-height:16px;color:#808080;transform:scaleX(1.0093);">Ctrl+V</span>
<div class="a" style="left:587px;top:486px;width:308px;height:1px;background:#d7d7d7"></div>
<span class="a t" id="cm13" style="left:612px;top:496.84px;font-size:12px;line-height:16px;color:#000;transform:scaleX(0.9801);">Select deploy operation ...</span>
<div class="a" style="left:587px;top:521px;width:308px;height:1px;background:#d7d7d7"></div>
<span class="a t" id="cm14" style="left:612px;top:531.84px;font-size:12px;line-height:16px;color:#000;transform:scaleX(0.9728);">Run Selection/Line</span>
<span class="a t" id="cs14" style="left:793.5px;top:531.84px;font-size:12px;line-height:16px;color:#808080;transform:scaleX(1.0282);">Alt+Ctrl+Enter</span>
<div class="a" style="left:587px;top:556px;width:308px;height:1px;background:#d7d7d7"></div>
<span class="a t" id="cm15" style="left:612px;top:566.84px;font-size:12px;line-height:16px;color:#000;transform:scaleX(0.7316);">コマンド パレット...</span>
<span class="a t" id="cs15" style="left:805.5px;top:566.84px;font-size:12px;line-height:16px;color:#808080;transform:scaleX(1.0124);">Ctrl+Shift+P</span>
<svg class="a" style="left:768px;top:178px" width="14" height="21" viewBox="0 0 14 21"><path d="M1.5 1.5 V17.5 L5.2 13.8 L8 19.8 L10.2 18.8 L7.5 12.8 H12.5 Z" fill="#fff" stroke="#000" stroke-width="1" stroke-linejoin="miter"/></svg>
</body>
</html>
